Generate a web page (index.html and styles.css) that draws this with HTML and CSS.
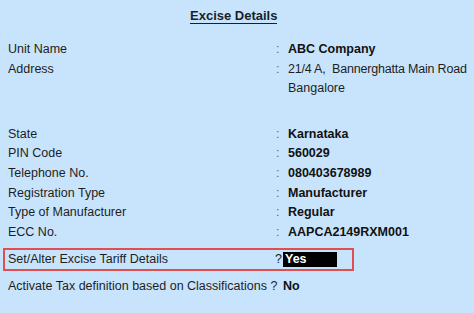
FILE: index.html
```html
<!DOCTYPE html>
<html>
<head>
<meta charset="utf-8">
<link rel="stylesheet" href="styles.css">
</head>
<body>
<div class="screen">
  <div class="title"><span>Excise Details</span></div>
  <div class="rows">
    <div class="row"><span class="lbl">Unit Name</span><span class="sep">:</span><span class="val b">ABC Company</span></div>
    <div class="row"><span class="lbl">Address</span><span class="sep">:</span><span class="val addr">21/4 A,&nbsp; Bannerghatta Main Road</span></div>
    <div class="row"><span class="lbl"></span><span class="sep"></span><span class="val">Bangalore</span></div>
  </div>
  <div class="rows group2">
    <div class="row"><span class="lbl">State</span><span class="sep">:</span><span class="val b">Karnataka</span></div>
    <div class="row"><span class="lbl">PIN Code</span><span class="sep">:</span><span class="val b">560029</span></div>
    <div class="row"><span class="lbl">Telephone No.</span><span class="sep">:</span><span class="val b">080403678989</span></div>
    <div class="row"><span class="lbl">Registration Type</span><span class="sep">:</span><span class="val b">Manufacturer</span></div>
    <div class="row"><span class="lbl">Type of Manufacturer</span><span class="sep">:</span><span class="val b">Regular</span></div>
    <div class="row"><span class="lbl">ECC No.</span><span class="sep">:</span><span class="val b">AAPCA2149RXM001</span></div>
    <div class="row hl"><span class="lbl">Set/Alter Excise Tariff Details</span><span class="sep q">?</span><span class="val"><span class="sel">Yes</span></span></div>
    <div class="row last"><span class="lbl wide">Activate Tax definition based on Classifications ?</span><span class="val b tight">No</span></div>
  </div>
</div>
</body>
</html>
```

FILE: styles.css
```css
html, body {
  margin: 0;
  padding: 0;
}
body {
  background: #c8e4fc;
  font-family: "Liberation Sans", Arial, sans-serif;
  font-size: 12.5px;
  color: #1e1e1e;
  width: 474px;
  height: 313px;
  overflow: hidden;
}
.screen {
  padding-top: 6px;
}
.title {
  line-height: 20px;
  padding-left: 190px;
  font-weight: bold;
  font-size: 13px;
  color: #1a1f2a;
}
.title span {
  border-bottom: 1.5px solid #1a1f2a;
}
.rows {
  margin-top: 14px;
  padding-left: 8px;
}
.group2 {
  margin-top: 26px;
}
.row {
  display: grid;
  grid-template-columns: 267px 8px 1fr;
  line-height: 19.6px;
  white-space: nowrap;
}
.sep {
  color: #666;
  padding-left: 1px;
}
.val {
  padding-left: 5px;
}
.addr {
  letter-spacing: -0.2px;
}
.b {
  font-weight: bold;
  color: #111;
}
.hl {
  margin-top: 6px;
  margin-left: -5px;
  width: 344px;
  border: 2px solid #df4f4f;
  padding-left: 3px;
  line-height: 18px;
  padding-bottom: 1px;
}
.hl .q {
  padding-left: 0;
  color: #222;
}
.hl .val {
  padding-left: 0;
  display: flex;
  align-items: center;
}
.sel {
  display: inline-block;
  background: #000;
  color: #fff;
  font-weight: bold;
  width: 52px;
  padding-left: 2px;
  line-height: 15px;
  height: 15px;
}
.last {
  margin-top: 6px;
  grid-template-columns: 275px 1fr;
}
.tight {
  padding-left: 0;
}
```
